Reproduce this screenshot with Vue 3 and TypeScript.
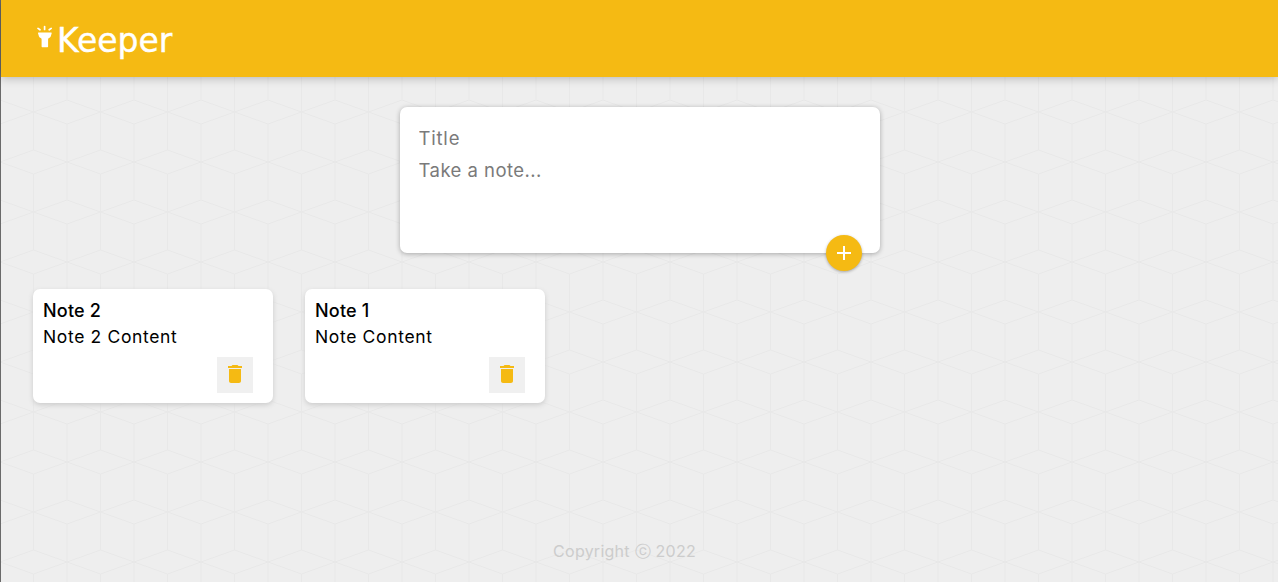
<script setup lang="ts">
import { ref } from 'vue';

interface Note {
  id: number;
  title: string;
  content: string;
}

const notes = ref<Note[]>([
  { id: 2, title: 'Note 2', content: 'Note 2 Content' },
  { id: 1, title: 'Note 1', content: 'Note Content' },
]);

const title = ref('');
const content = ref('');

function addNote() {
  if (!title.value && !content.value) return;
  notes.value.unshift({ id: Date.now(), title: title.value, content: content.value });
  title.value = '';
  content.value = '';
}

function removeNote(id: number) {
  notes.value = notes.value.filter((n) => n.id !== id);
}
</script>

<template>
  <div class="page">
    <header class="header">
      <h1 class="logo">
        <svg class="logo-icon" width="18" height="24" viewBox="0 0 18 24" aria-hidden="true">
          <path d="M2 7.5h13.2c.4 0 .6.3.5.7l-1 3.2c-.3.8-1 1.2-1.7 1.6-.6.3-.9.8-.9 1.4v7.2c0 .4-.2.6-.6.6H6.2c-.4 0-.6-.2-.6-.6v-7.2c0-.6-.3-1.1-.9-1.4-.7-.4-1.4-.8-1.7-1.6l-1-3.2c-.1-.4.1-.7.5-.7z" fill="#fff" />
          <path d="M8.6 1.5v3M2 3.4l2 1.4M15.2 3.4l-2 1.4" stroke="#fff" stroke-width="1.7" stroke-linecap="round" fill="none" />
        </svg>
        <span class="logo-text">Keeper</span>
      </h1>
    </header>

    <form class="create-note" @submit.prevent="addNote">
      <input v-model="title" class="field title-field" name="title" placeholder="Title" />
      <textarea v-model="content" class="field area" name="content" placeholder="Take a note..." rows="3" />
      <button class="fab" type="submit" aria-label="Add note">
        <svg width="24" height="24" viewBox="0 0 24 24" aria-hidden="true">
          <path d="M19 13h-6v6h-2v-6H5v-2h6V5h2v6h6v2z" fill="#fff" />
        </svg>
      </button>
    </form>

    <main class="notes">
      <article v-for="note in notes" :key="note.id" class="note">
        <h2 class="note-title">{{ note.title }}</h2>
        <p class="note-text">{{ note.content }}</p>
        <button class="delete" type="button" aria-label="Delete note" @click="removeNote(note.id)">
          <svg width="24" height="24" viewBox="0 0 24 24" aria-hidden="true">
            <path d="M6 19c0 1.1.9 2 2 2h8c1.1 0 2-.9 2-2V7H6v12zM19 4h-3.5l-1-1h-5l-1 1H5v2h14V4z" fill="#f5ba13" />
          </svg>
        </button>
      </article>
    </main>

    <footer class="footer">Copyright ⓒ 2022</footer>
  </div>
</template>

<style>
html,
body {
  margin: 0;
  padding: 0;
}
</style>

<style scoped>
.page {
  box-sizing: border-box;
  min-height: 582px;
  display: flex;
  flex-direction: column;
  border-left: 1px solid #6a6a6a;
  font-family: Inter, "Noto Sans", sans-serif;
  background-color: #eee;
  background-image: url("data:image/svg+xml,%3Csvg xmlns='http://www.w3.org/2000/svg' width='67' height='100' viewBox='0 0 67 100'%3E%3Cpath d='M-33.5 12L0 0L33.5 12L0 24ZM33.5 12L67 0L100.5 12L67 24ZM0 62L33.5 50L67 62L33.5 74ZM0 24V100M67 24V100M33.5 74V100M33.5 0V50' fill='none' stroke='%23e8e8e8' stroke-width='1'/%3E%3C/svg%3E");
  background-position: -1.5px 0;
}

.header {
  height: 77px;
  box-sizing: border-box;
  display: flex;
  align-items: center;
  padding: 0 0 0 35px;
  background: #f5ba13;
  box-shadow: 0 0 10px rgba(0, 0, 0, 0.3);
}

.logo {
  display: flex;
  align-items: center;
  gap: 3px;
  margin: 0;
  color: #fff;
  font-family: "DejaVu Sans", sans-serif;
  font-size: 33px;
  font-weight: 400;
  line-height: 1;
}

.logo-icon {
  margin-bottom: 3px;
}

.logo-text {
  margin-top: 4px;
  -webkit-text-stroke: 0.4px #fff;
}

.create-note {
  position: relative;
  box-sizing: border-box;
  width: 480px;
  height: 146px;
  margin: 30px auto 0;
  padding: 15px 19px;
  background: #fff;
  border-radius: 7px;
  box-shadow: 0 1px 5px rgba(0, 0, 0, 0.3);
}

.field {
  display: block;
  box-sizing: border-box;
  width: 100%;
  padding: 0;
  border: none;
  outline: none;
  resize: none;
  background: transparent;
  font-family: inherit;
  font-size: 18.5px;
  line-height: 32px;
  letter-spacing: 0.46px;
  color: #333;
}

.title-field {
  letter-spacing: 0.8px;
}

.field::placeholder {
  color: #7a7a7a;
}

.area {
  height: 64px;
}

.fab {
  position: absolute;
  right: 18px;
  bottom: -18px;
  width: 36px;
  height: 36px;
  display: flex;
  align-items: center;
  justify-content: center;
  padding: 0;
  border: none;
  border-radius: 50%;
  background: #f5ba13;
  box-shadow: 0 1px 3px rgba(0, 0, 0, 0.3);
  cursor: pointer;
}

.notes {
  display: flex;
  gap: 32px;
  margin-top: 36px;
  padding-left: 32px;
}

.note {
  box-sizing: border-box;
  width: 240px;
  height: 114px;
  padding: 11px 20px 10px 10px;
  display: flex;
  flex-direction: column;
  background: #fff;
  border-radius: 7px;
  box-shadow: 0 2px 5px #ccc;
}

.note-title {
  margin: 0 0 5px;
  font-size: 18px;
  font-weight: 500;
  line-height: 21px;
  letter-spacing: 0.2px;
  color: #000;
}

.note-text {
  margin: 0;
  font-size: 17.5px;
  line-height: 21px;
  letter-spacing: 0.65px;
  color: #000;
}

.delete {
  align-self: flex-end;
  width: 36px;
  height: 36px;
  margin-top: auto;
  display: flex;
  align-items: center;
  justify-content: center;
  padding: 0 0 2px;
  border: none;
  background: #f0f0f0;
  cursor: pointer;
}

.footer {
  margin-top: auto;
  padding: 0 30px 21px 0;
  text-align: center;
  font-size: 16px;
  line-height: 20px;
  letter-spacing: 0.25px;
  color: #ccc;
}
</style>
